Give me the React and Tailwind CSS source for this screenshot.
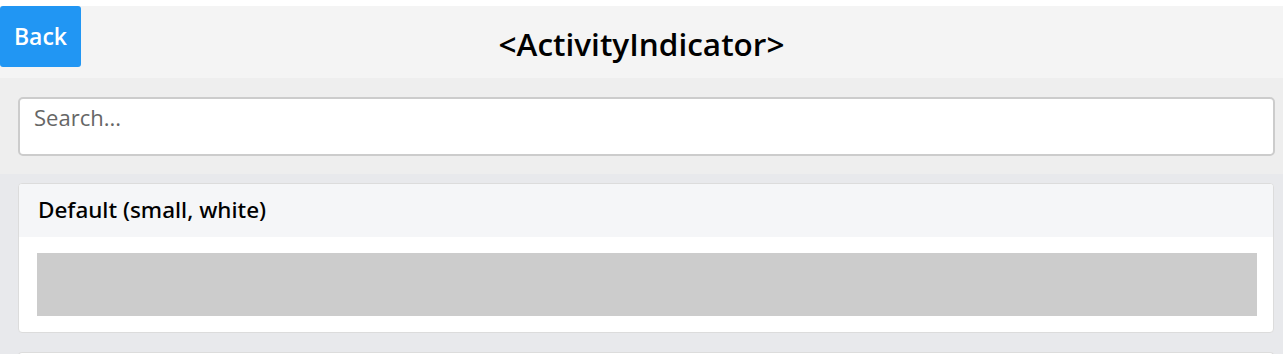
import React from "react";

const font = { fontFamily: '"Open Sans", "Noto Sans", sans-serif' };

const Card = ({ title }) => (
  <div className="rounded-[4px] border border-[#dcdcdc] bg-white overflow-hidden">
    <div className="h-[53px] bg-[#f5f6f8] px-[19px] flex items-center">
      <span
        className="text-[22.5px] font-medium text-black leading-none"
        style={{ fontFamily: '"Noto Sans", "Open Sans", sans-serif' }}
      >
        {title}
      </span>
    </div>
    <div className="pt-[16px] pb-[16px] pl-[18px] pr-[16px]">
      <div className="h-[63px] bg-[#cccccc]" />
    </div>
  </div>
);

export default function App() {
  return (
    <div className="min-h-screen bg-white pt-[6px]" style={font}>
      {/* Header */}
      <div className="h-[72px] bg-[#f4f4f4] grid grid-cols-[1fr_auto_1fr] items-start">
        <div>
          <button className="h-[61px] w-[81px] rounded-[3px] bg-[#2196f3] text-white text-[23px] font-semibold flex items-center justify-center">
            Back
          </button>
        </div>
        <h1 className="pt-[22px] text-[31.5px] font-semibold text-black leading-none">
          {"<ActivityIndicator>"}
        </h1>
        <div />
      </div>

      {/* Search */}
      <div className="bg-[#eeeeee] pt-[19px] pb-[18px] pl-[18px] pr-[8px]">
        <input
          type="text"
          placeholder="Search..."
          className="block w-full h-[59px] rounded-[5px] border-2 border-[#cccccc] bg-white px-[14px] pt-[2px] pb-[22px] text-[22px] text-black placeholder-[#666666] outline-none"
        />
      </div>

      {/* Content */}
      <div className="bg-[#e8e9ec] pt-[9px] pl-[18px] pr-[9px] flex flex-col gap-[19px] pb-[20px]">
        <Card title="Default (small, white)" />
        <div className="h-[12px] rounded-t-[4px] border border-b-0 border-[#dcdcdc] bg-white" />
      </div>
    </div>
  );
}
